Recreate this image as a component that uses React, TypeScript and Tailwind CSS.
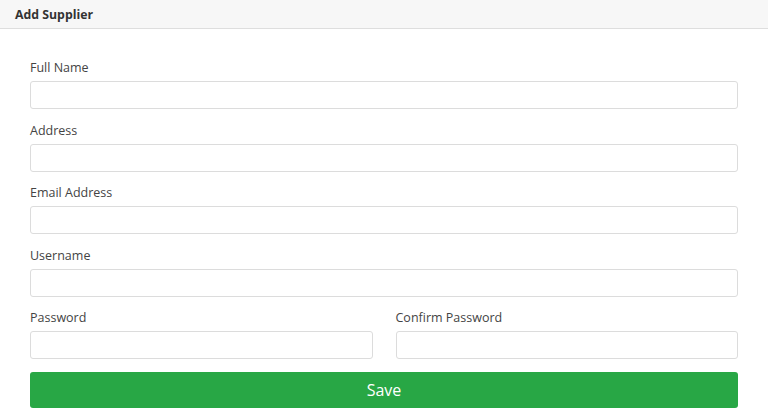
export default function App() {
  const font = { fontFamily: '"Open Sans", "Noto Sans", sans-serif' };
  const Field = ({ label, className = "" }: { label: string; className?: string }) => (
    <div className={"flex flex-col " + className}>
      <label className="text-[12.5px] leading-[18px] text-[#444]">{label}</label>
      <input className="mt-[4px] h-[28px] w-full rounded-[3px] border border-[#dcdcdc] bg-white outline-none" />
    </div>
  );
  return (
    <div className="w-[768px] h-[413px] bg-white overflow-hidden" style={font}>
      <div className="h-[29px] bg-[#f7f7f7] border-b border-[#dedede] px-[15px] pt-[1px]">
        <span className="text-[12.3px] font-bold leading-[18px] text-[#333]">Add Supplier</span>
      </div>
      <div className="px-[30px] pt-[30px]">
        <div className="flex flex-col gap-[12.5px]">
          <Field label="Full Name" />
          <Field label="Address" />
          <Field label="Email Address" />
          <Field label="Username" />
          <div className="flex gap-[23px]">
            <Field label="Password" className="flex-1" />
            <Field label="Confirm Password" className="flex-1" />
          </div>
          <button className="h-[36px] w-full rounded-[3px] bg-[#28a745] text-white text-[16px]">Save</button>
        </div>
      </div>
    </div>
  );
}
